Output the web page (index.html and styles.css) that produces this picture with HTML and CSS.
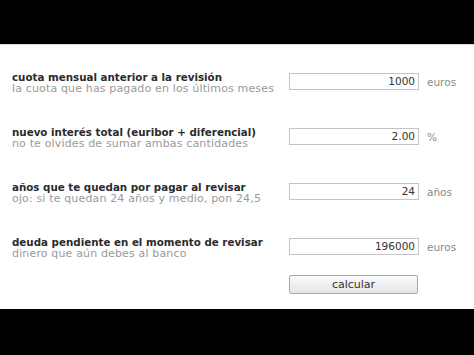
FILE: index.html
```html
<!DOCTYPE html>
<html lang="es">
<head>
<meta charset="utf-8">
<title>calculadora</title>
<link rel="stylesheet" href="styles.css">
</head>
<body>
<div class="bar bar-top"></div>
<main class="content">
  <div class="row">
    <div class="label">
      <div class="title">cuota mensual anterior a la revisión</div>
      <div class="hint">la cuota que has pagado en los últimos meses</div>
    </div>
    <div class="field"><span class="input">1000</span><span class="unit">euros</span></div>
  </div>
  <div class="row">
    <div class="label">
      <div class="title">nuevo interés total (euribor + diferencial)</div>
      <div class="hint">no te olvides de sumar ambas cantidades</div>
    </div>
    <div class="field"><span class="input">2.00</span><span class="unit">%</span></div>
  </div>
  <div class="row">
    <div class="label">
      <div class="title">años que te quedan por pagar al revisar</div>
      <div class="hint">ojo: si te quedan 24 años y medio, pon 24,5</div>
    </div>
    <div class="field"><span class="input">24</span><span class="unit">años</span></div>
  </div>
  <div class="row last">
    <div class="label">
      <div class="title">deuda pendiente en el momento de revisar</div>
      <div class="hint">dinero que aún debes al banco</div>
    </div>
    <div class="field"><span class="input">196000</span><span class="unit">euros</span></div>
  </div>
  <div class="actions"><span class="button">calcular</span></div>
</main>
<div class="bar bar-bottom"></div>
</body>
</html>
```
FILE: styles.css
```css
html, body {
  margin: 0;
  padding: 0;
  background: #000;
}
body {
  width: 474px;
  height: 355px;
  overflow: hidden;
  display: flex;
  flex-direction: column;
  font-family: "DejaVu Sans", Verdana, sans-serif;
}
.bar-top { height: 44px; background: #000; }
.bar-bottom { flex: 1; background: #000; }
.content {
  height: 265px;
  box-sizing: border-box;
  background: #fff;
  padding: 26px 0 0 12px;
  border-top: 1px solid #d8d8d8;
}
.row {
  display: flex;
  align-items: flex-start;
  height: 55px;
}
.row.last { height: 39px; }
.label {
  width: 277px;
}
.title {
  font-weight: bold;
  font-size: 10.3px;
  line-height: 12px;
  color: #2b2b2b;
}
.hint {
  font-size: 11px;
  letter-spacing: 0.15px;
  line-height: 12px;
  color: #9a9a9a;
}
.field {
  display: flex;
  align-items: center;
  margin-top: 2px;
}
.input {
  box-sizing: border-box;
  width: 130px;
  height: 17px;
  border: 1px solid #c4c4c4;
  background: #fff;
  text-align: right;
  padding: 0 3px;
  font-size: 10.5px;
  line-height: 15px;
  color: #333;
}
.unit {
  margin-left: 8px;
  font-size: 10.5px;
  color: #8a8a8a;
}
.actions {
  padding-left: 277px;
}
.button {
  display: block;
  box-sizing: border-box;
  width: 129px;
  height: 19px;
  border: 1px solid #a8a8a8;
  border-radius: 2px;
  background: linear-gradient(#fbfbfb, #e4e4e4);
  text-align: center;
  font-size: 11px;
  line-height: 17px;
  color: #333;
}
```
